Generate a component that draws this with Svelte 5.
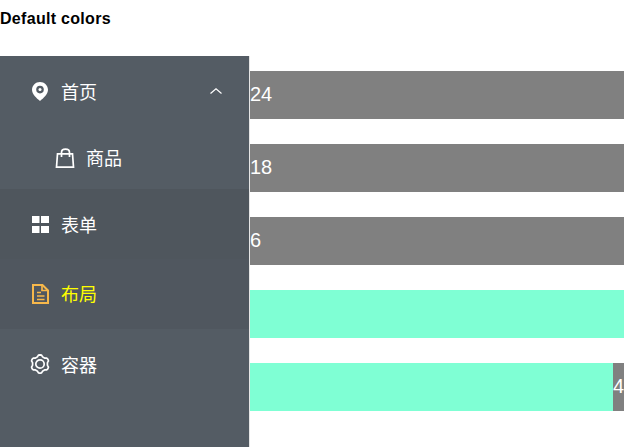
<script lang="ts">
  const bars = [
    { label: '24', fill: 0 },
    { label: '18', fill: 0 },
    { label: '6', fill: 0 },
    { label: '', fill: 100 },
    { label: '4', fill: 97 },
  ]

  // six lobed gear outline
  const gear = Array.from({ length: 36 }, (_, i) => {
    const a = ((i * 10 - 90) * Math.PI) / 180
    const lobe = Math.cos(((i * 10 * 6) * Math.PI) / 180)
    const r = 8.3 + 0.9 * Math.max(-1, Math.min(1, lobe * 1.6))
    return `${(10 + r * Math.cos(a)).toFixed(2)},${(10 + r * Math.sin(a)).toFixed(2)}`
  }).join(' ')
</script>

<h4 class="title">Default colors</h4>
<div class="page">
  <nav class="menu">
    <div class="item">
      <svg class="icon" viewBox="0 0 20 20">
        <path fill="#fff" fill-rule="evenodd" d="M10 1C5.600 1 2 4.500 2 8.800c0 4.200 4.500 8.500 8 11.200 3.500-2.700 8-7 8-11.200C18 4.500 14.400 1 10 1zm0 3.800a3.800 3.800 0 1 1 0 7.600 3.800 3.800 0 0 1 0-7.600z" />
        <circle cx="10" cy="8.600" r="1.500" fill="#fff" />
      </svg>
      <span>首页</span>
      <svg class="arrow" viewBox="0 0 12 6">
        <path d="M.5 5.500L6 .8l5.500 4.700" fill="none" stroke="#fff" stroke-width="1.200" />
      </svg>
    </div>
    <div class="item sub">
      <svg class="icon" viewBox="0 0 20 20" fill="none" stroke="#fff" stroke-width="1.700">
        <path d="M2.500 5.800h15l1 13.300H1.500z" />
        <path d="M6.500 9V4.500c0-4.400 8-4.400 8 0V9" />
      </svg>
      <span>商品</span>
    </div>
    <div class="item active">
      <svg class="icon" viewBox="0 0 20 20" fill="#fff">
        <rect x="2" y="2" width="7.500" height="7" />
        <rect x="11" y="2" width="8" height="7" />
        <rect x="2" y="12" width="7.500" height="7" />
        <rect x="11" y="12" width="8" height="7" />
      </svg>
      <span>表单</span>
    </div>
    <div class="item current">
      <svg class="icon" viewBox="0 0 20 20" fill="none" stroke="#f7b84b" stroke-width="2">
        <path d="M3 1h9.500L18 6.500V19H3z" />
        <path d="M12 1.500v5h6M7 8.500h4M7 12h7.500M7 15.500h7.500" stroke-width="1.700" />
      </svg>
      <span>布局</span>
    </div>
    <div class="item">
      <svg class="icon" viewBox="0 0 20 20" fill="none" stroke="#fff" stroke-width="1.700">
        <polygon points={gear} stroke-linejoin="round" />
        <circle cx="10" cy="10" r="4.200" />
      </svg>
      <span>容器</span>
    </div>
  </nav>
  <div class="bars">
    {#each bars as bar}
      <div class="bar">
        <div class="fill" style="width: {bar.fill}%"></div>
        <span class="num" class:end={bar.fill > 0}>{bar.label}</span>
      </div>
    {/each}
  </div>
</div>

<style>
  :global(body) { margin: 0; background: #fff; overflow: hidden; }
  .title {
    margin: 0; height: 56px; padding-top: 10px; box-sizing: border-box;
    font: bold 16px/18px "Liberation Sans", Arial, sans-serif; letter-spacing: .3px; color: #000;
  }
  .page { display: flex; height: 391px; }
  .menu {
    width: 250px; flex: none; box-sizing: border-box; background: #545c64;
    border-right: 1px solid #e6e6e6; color: #fff;
    font: 18px "Noto Sans CJK SC", "Liberation Sans", sans-serif;
  }
  .item { display: flex; align-items: center; height: 70px; padding: 0 30px; position: relative; }
  .item.sub { height: 63px; padding-left: 55px; }
  .item.sub span, .item.current span { margin-top: -2px; }
  .item.active { background: #4f565d; }
  .item.current { background: #50575f; color: #ff0; }
  .icon { width: 20px; height: 20px; margin-right: 11px; flex: none; }
  .arrow { position: absolute; right: 27px; top: 32px; width: 12px; height: 6px; }
  .bars {
    flex: 1; display: flex; flex-direction: column; gap: 25px; padding-top: 15px;
    font: 20px "Liberation Sans", Arial, sans-serif; color: #fff;
  }
  .bar { height: 48px; background: #808080; position: relative; display: flex; align-items: center; }
  .fill { position: absolute; left: 0; top: 0; bottom: 0; background: #7fffd4; }
  .num { position: relative; flex: 1; margin-top: -2px; }
  .num.end { text-align: right; }
</style>
